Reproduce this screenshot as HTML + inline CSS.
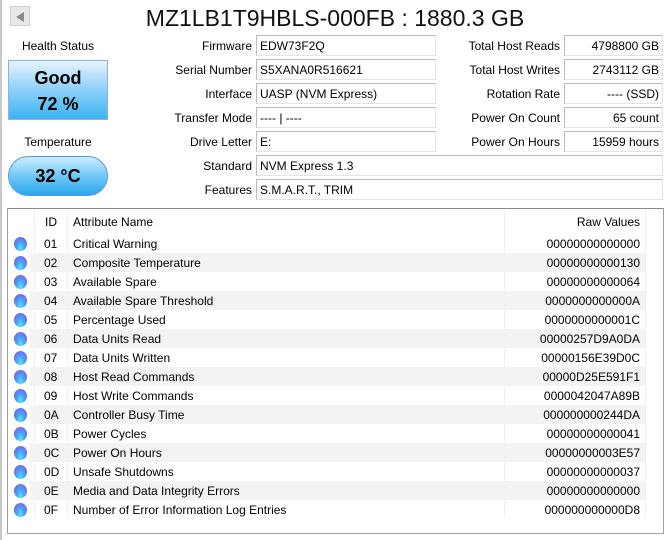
<!DOCTYPE html>
<html><head><meta charset="utf-8"><style>
body{margin:0;width:670px;height:540px;background:#fff;font-family:"Liberation Sans",sans-serif;font-size:12px;color:#000;position:relative;overflow:hidden}
.a{position:absolute;white-space:nowrap}
.lbl{text-align:right;width:160px}
.box{position:absolute;border:1px solid #bcbcbc;border-right-color:#e4e4e4;border-bottom-color:#e4e4e4;line-height:21px;padding:0 3px;box-sizing:border-box;height:21px}
.r{text-align:right}
.row{position:absolute;left:30px;width:615px;height:19px;line-height:20px}
.row.s{background:#f3f3f3}
.dot{position:absolute;left:-16px;top:3px;width:13px;height:14px;border-radius:50%;background:radial-gradient(ellipse at 50% 85%,#5fe0ff 0,#40b0f4 35%,#7070f0 70%,#6050d8 100%)}
</style></head><body>
<div class="a" style="left:0;top:0;width:2px;height:540px;background:#c8c8c8"></div>
<div class="a" style="left:10px;top:6px;width:20px;height:20px;background:#e8e8e8;border:1px solid #d0d0d0;box-sizing:border-box"><div style="position:absolute;left:5px;top:5px;width:0;height:0;border-top:5px solid transparent;border-bottom:5px solid transparent;border-right:8px solid #8a8a8a"></div></div>
<div class="a" style="left:0;width:670px;top:5px;text-align:center;font-size:23px;color:#111">MZ1LB1T9HBLS-000FB : 1880.3 GB</div>
<div class="a" style="left:8px;width:100px;top:39px;text-align:center">Health Status</div>
<div class="a" style="left:8px;top:60px;width:100px;height:60px;box-sizing:border-box;border:1px solid #8ab4e8;background:linear-gradient(#e8f4ff,#8ccff8 50%,#3cb4f2);text-align:center;font-weight:bold;font-size:18px;line-height:26px;padding-top:4px">Good<br>72 %</div>
<div class="a" style="left:8px;width:100px;top:135px;text-align:center">Temperature</div>
<div class="a" style="left:8px;top:156px;width:100px;height:40px;box-sizing:border-box;border:1px solid #5a9ae0;border-radius:20px;background:linear-gradient(#cfeeff,#70c8f6 50%,#2aa8ee);text-align:center;font-weight:bold;font-size:18px;line-height:38px">32 °C</div>

<div class="a lbl" style="left:92px;top:39px">Firmware</div>
<div class="a lbl" style="left:92px;top:63px">Serial Number</div>
<div class="a lbl" style="left:92px;top:87px">Interface</div>
<div class="a lbl" style="left:92px;top:111px">Transfer Mode</div>
<div class="a lbl" style="left:92px;top:135px">Drive Letter</div>
<div class="a lbl" style="left:92px;top:159px">Standard</div>
<div class="a lbl" style="left:92px;top:183px">Features</div>
<div class="box" style="left:256px;top:35px;width:180px">EDW73F2Q</div>
<div class="box" style="left:256px;top:59px;width:180px">S5XANA0R516621</div>
<div class="box" style="left:256px;top:83px;width:180px">UASP (NVM Express)</div>
<div class="box" style="left:256px;top:107px;width:180px">---- | ----</div>
<div class="box" style="left:256px;top:131px;width:180px">E:</div>
<div class="box" style="left:256px;top:155px;width:407px">NVM Express 1.3</div>
<div class="box" style="left:256px;top:179px;width:407px">S.M.A.R.T., TRIM</div>

<div class="a lbl" style="left:400px;top:39px">Total Host Reads</div>
<div class="a lbl" style="left:400px;top:63px">Total Host Writes</div>
<div class="a lbl" style="left:400px;top:87px">Rotation Rate</div>
<div class="a lbl" style="left:400px;top:111px">Power On Count</div>
<div class="a lbl" style="left:400px;top:135px">Power On Hours</div>
<div class="box r" style="left:564px;top:35px;width:99px">4798800 GB</div>
<div class="box r" style="left:564px;top:59px;width:99px">2743112 GB</div>
<div class="box r" style="left:564px;top:83px;width:99px">---- (SSD)</div>
<div class="box r" style="left:564px;top:107px;width:99px">65 count</div>
<div class="box r" style="left:564px;top:131px;width:99px">15959 hours</div>

<div class="a" style="left:7px;top:208px;width:657px;height:326px;box-sizing:border-box;border:1px solid #a0a0a0;border-top-color:#888"></div>
<div class="a" style="left:34px;top:210px;width:1px;height:308px;background:#f0f0f0"></div>
<div class="a" style="left:67px;top:210px;width:1px;height:308px;background:#f0f0f0"></div>
<div class="a" style="left:504px;top:210px;width:1px;height:308px;background:#f0f0f0"></div>
<div class="a" style="left:645px;top:210px;width:1px;height:308px;background:#f0f0f0"></div>
<div class="a" style="left:45px;top:215px">ID</div>
<div class="a" style="left:73px;top:215px">Attribute Name</div>
<div class="a" style="left:560px;top:215px;width:80px;text-align:right">Raw Values</div>
<div class="row" style="top:234px"><div class="dot"></div><span class="a" style="left:14px">01</span><span class="a" style="left:43px">Critical Warning</span><span class="a" style="right:5px">00000000000000</span></div>
<div class="row s" style="top:253px"><div class="dot"></div><span class="a" style="left:14px">02</span><span class="a" style="left:43px">Composite Temperature</span><span class="a" style="right:5px">00000000000130</span></div>
<div class="row" style="top:272px"><div class="dot"></div><span class="a" style="left:14px">03</span><span class="a" style="left:43px">Available Spare</span><span class="a" style="right:5px">00000000000064</span></div>
<div class="row s" style="top:291px"><div class="dot"></div><span class="a" style="left:14px">04</span><span class="a" style="left:43px">Available Spare Threshold</span><span class="a" style="right:5px">0000000000000A</span></div>
<div class="row" style="top:310px"><div class="dot"></div><span class="a" style="left:14px">05</span><span class="a" style="left:43px">Percentage Used</span><span class="a" style="right:5px">0000000000001C</span></div>
<div class="row s" style="top:329px"><div class="dot"></div><span class="a" style="left:14px">06</span><span class="a" style="left:43px">Data Units Read</span><span class="a" style="right:5px">00000257D9A0DA</span></div>
<div class="row" style="top:348px"><div class="dot"></div><span class="a" style="left:14px">07</span><span class="a" style="left:43px">Data Units Written</span><span class="a" style="right:5px">00000156E39D0C</span></div>
<div class="row s" style="top:367px"><div class="dot"></div><span class="a" style="left:14px">08</span><span class="a" style="left:43px">Host Read Commands</span><span class="a" style="right:5px">00000D25E591F1</span></div>
<div class="row" style="top:386px"><div class="dot"></div><span class="a" style="left:14px">09</span><span class="a" style="left:43px">Host Write Commands</span><span class="a" style="right:5px">0000042047A89B</span></div>
<div class="row s" style="top:405px"><div class="dot"></div><span class="a" style="left:14px">0A</span><span class="a" style="left:43px">Controller Busy Time</span><span class="a" style="right:5px">000000000244DA</span></div>
<div class="row" style="top:424px"><div class="dot"></div><span class="a" style="left:14px">0B</span><span class="a" style="left:43px">Power Cycles</span><span class="a" style="right:5px">00000000000041</span></div>
<div class="row s" style="top:443px"><div class="dot"></div><span class="a" style="left:14px">0C</span><span class="a" style="left:43px">Power On Hours</span><span class="a" style="right:5px">00000000003E57</span></div>
<div class="row" style="top:462px"><div class="dot"></div><span class="a" style="left:14px">0D</span><span class="a" style="left:43px">Unsafe Shutdowns</span><span class="a" style="right:5px">00000000000037</span></div>
<div class="row s" style="top:481px"><div class="dot"></div><span class="a" style="left:14px">0E</span><span class="a" style="left:43px">Media and Data Integrity Errors</span><span class="a" style="right:5px">00000000000000</span></div>
<div class="row" style="top:500px"><div class="dot"></div><span class="a" style="left:14px">0F</span><span class="a" style="left:43px">Number of Error Information Log Entries</span><span class="a" style="right:5px">000000000000D8</span></div>
</body></html>
